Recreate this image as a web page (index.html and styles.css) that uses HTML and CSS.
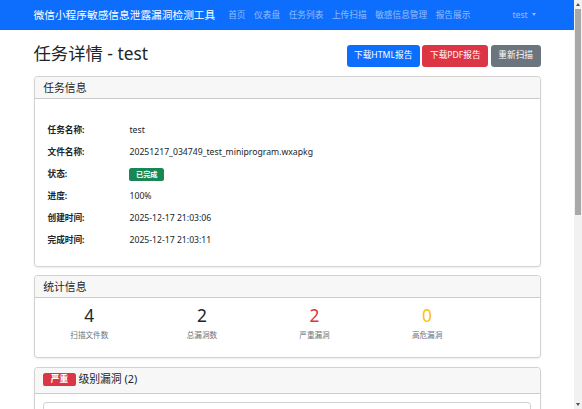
FILE: index.html
```html
<!DOCTYPE html>
<html lang="zh-CN">
<head>
  <meta charset="utf-8">
  <link rel="stylesheet" href="styles.css">
  <title>任务详情 - test</title>
</head>
<body>
  <nav class="navbar">
    <div class="container nav-inner">
      <a class="brand" href="#">微信小程序敏感信息泄露漏洞检测工具</a>
      <ul class="nav-links">
        <li><a href="#">首页</a></li>
        <li><a href="#">仪表盘</a></li>
        <li><a href="#">任务列表</a></li>
        <li><a href="#">上传扫描</a></li>
        <li><a href="#">敏感信息管理</a></li>
        <li><a href="#">报告展示</a></li>
      </ul>
      <div class="nav-user">
        <a href="#">test<span class="caret"></span></a>
      </div>
    </div>
  </nav>

  <main class="container page">
    <div class="page-head">
      <h2>任务详情 - test</h2>
      <div class="actions">
        <a class="btn btn-primary" href="#">下载HTML报告</a>
        <a class="btn btn-danger" href="#">下载PDF报告</a>
        <a class="btn btn-secondary" href="#">重新扫描</a>
      </div>
    </div>

    <section class="card">
      <div class="card-header"><h5>任务信息</h5></div>
      <div class="card-body info-body">
        <table class="info">
          <tr><th>任务名称:</th><td>test</td></tr>
          <tr><th>文件名称:</th><td>20251217_034749_test_miniprogram.wxapkg</td></tr>
          <tr><th>状态:</th><td><span class="badge bg-success">已完成</span></td></tr>
          <tr><th>进度:</th><td>100%</td></tr>
          <tr><th>创建时间:</th><td>2025-12-17 21:03:06</td></tr>
          <tr><th>完成时间:</th><td>2025-12-17 21:03:11</td></tr>
        </table>
      </div>
    </section>

    <section class="card">
      <div class="card-header"><h5>统计信息</h5></div>
      <div class="card-body stats">
        <div class="stat">
          <div class="num">4</div>
          <small>扫描文件数</small>
        </div>
        <div class="stat">
          <div class="num">2</div>
          <small>总漏洞数</small>
        </div>
        <div class="stat">
          <div class="num text-danger">2</div>
          <small>严重漏洞</small>
        </div>
        <div class="stat">
          <div class="num text-warning">0</div>
          <small>高危漏洞</small>
        </div>
      </div>
    </section>

    <section class="card">
      <div class="card-header level-header">
        <h5><span class="badge bg-danger level">严重</span> 级别漏洞 (2)</h5>
      </div>
      <div class="card-body">
        <div class="vuln"></div>
      </div>
    </section>
  </main>

  <div class="scrollbar">
    <span class="arrow up"></span>
    <span class="thumb"></span>
    <span class="arrow down"></span>
  </div>
</body>
</html>
```

FILE: styles.css
```css
:root {
  --blue: #0d6efd;
  --red: #dc3545;
  --green: #198754;
  --grey: #6c757d;
  --yellow: #ffc107;
  --text: #212529;
  --border: rgba(0, 0, 0, 0.175);
}

* {
  box-sizing: border-box;
}

body {
  margin: 0;
  padding-right: 8px;
  font-family: "Noto Sans", "Noto Sans CJK SC", sans-serif;
  font-size: 8.67px;
  line-height: 1.5;
  color: var(--text);
  background: #fff;
}

a {
  text-decoration: none;
}

h2, h5, p {
  margin: 0;
}

.container {
  width: 520px;
  margin: 0 auto;
  padding: 0 6.5px;
}

/* navbar */
.navbar {
  background: var(--blue);
  padding: 4.3px 0;
  margin-right: -8px;
  padding-right: 8px;
}

.nav-inner {
  display: flex;
  align-items: center;
}

.brand {
  color: #fff;
  font-size: 10.7px;
  line-height: 16.25px;
  padding: 2.7px 0;
  margin-right: 8.7px;
}

.nav-links {
  display: flex;
  list-style: none;
  margin: 0;
  padding: 0;
}

.nav-links a, .nav-user a {
  display: block;
  padding: 4.3px;
  line-height: 13px;
  color: rgba(255, 255, 255, 0.55);
}

.nav-user {
  margin-left: auto;
}

.caret {
  display: inline-block;
  margin-left: 4.5px;
  vertical-align: 1.5px;
  border-top: 3px solid;
  border-left: 2.7px solid transparent;
  border-right: 2.7px solid transparent;
}

/* page */
.page {
  padding-top: 13px;
  padding-bottom: 420px;
}

.page-head {
  display: flex;
  justify-content: space-between;
  align-items: center;
  margin-bottom: 8px;
}

.page-head h2 {
  font-size: 17.33px;
  font-weight: 400;
  line-height: 1.2;
  margin-bottom: 4.3px;
}

.actions {
  display: flex;
  gap: 2.7px;
}

.btn {
  display: inline-block;
  color: #fff;
  padding: 3.25px 6.5px;
  line-height: 13px;
  border: 1px solid transparent;
  border-radius: 3.3px;
}
.btn-primary { background: var(--blue); }
.btn-danger { background: var(--red); }
.btn-secondary { background: var(--grey); }

/* cards */
.card {
  border: 1px solid var(--border);
  border-radius: 3.5px;
  box-shadow: 0 1px 2px rgba(0, 0, 0, 0.075);
  margin-bottom: 8.5px;
  overflow: hidden;
}

.card-header {
  background: #f7f7f7;
  border-bottom: 1px solid var(--border);
  padding: 4.3px 8.7px;
}

.card-header h5 {
  font-size: 10.83px;
  font-weight: 400;
  line-height: 12.5px;
}

.card-body {
  padding: 8.7px;
}

.info-body {
  padding: 20px 8.7px 14.5px;
}

.info {
  border-collapse: collapse;
}

.info th, .info td {
  height: 22px;
  padding: 0 4.3px;
  text-align: left;
  vertical-align: middle;
}

.info th {
  width: 82px;
  font-weight: 700;
}

.badge {
  display: inline-block;
  color: #fff;
  font-weight: 700;
  line-height: 1;
  border-radius: 2.6px;
}
.bg-success { background: var(--green); }
.bg-danger { background: var(--red); }

.info .badge {
  font-size: 7.2px;
  padding: 2.8px 6.5px;
}

.level-header {
  padding: 5.5px 8.7px 6.5px;
}

.level {
  font-size: 8.7px;
  padding: 2px 7.5px;
  vertical-align: 1px;
}

/* stats */
.stats {
  display: grid;
  grid-template-columns: repeat(4, 112.6px);
  margin-left: -1.5px;
  padding: 7px 0 16.5px;
  text-align: center;
}

.stat .num {
  font-size: 17.33px;
  line-height: 21px;
  margin-bottom: 3.5px;
}

.stat small {
  display: block;
  font-size: 7.6px;
  line-height: 11px;
  color: var(--grey);
}

.text-danger { color: var(--red); }
.text-warning { color: var(--yellow); }

.vuln {
  border: 1px solid var(--border);
  border-radius: 3.5px;
  height: 120px;
}

/* window scrollbar, drawn since the headless view hides the real one */
.scrollbar {
  position: fixed;
  top: 0;
  right: 0;
  bottom: 0;
  width: 8px;
  background: #f1f1f1;
}

.thumb {
  position: absolute;
  top: 9px;
  left: 1px;
  right: 1px;
  height: 206px;
  background: #a8a8a8;
}

.arrow {
  position: absolute;
  left: 1.5px;
  border-left: 2.5px solid transparent;
  border-right: 2.5px solid transparent;
}
.arrow.up {
  top: 3px;
  border-bottom: 3px solid #505050;
}
.arrow.down {
  bottom: 3px;
  border-top: 3px solid #505050;
}
```
